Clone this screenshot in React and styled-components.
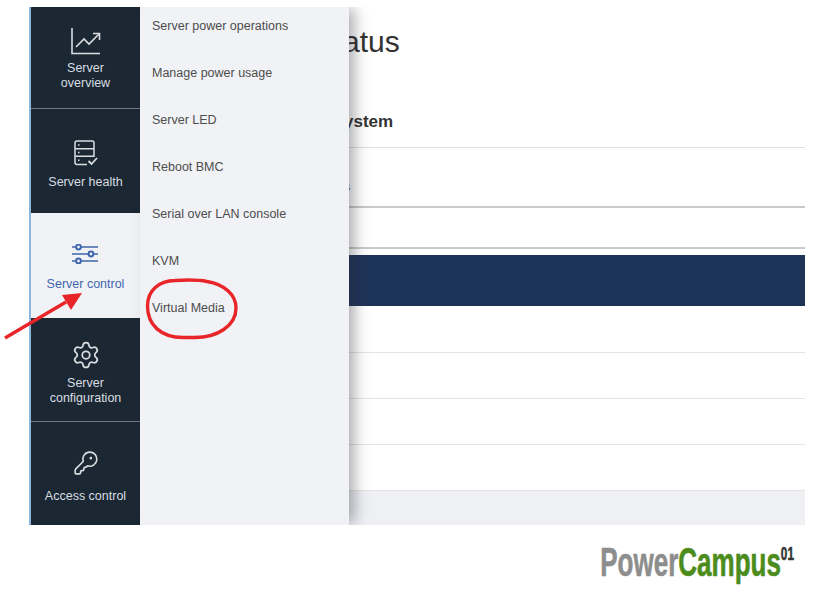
import React from 'react';
import styled, { createGlobalStyle } from 'styled-components';
import { KeyRound, Settings } from 'lucide-react';

const navItems = [
  { label: ['Server', 'overview'], icon: 'chart', height: 102, lift: 2, gap: 6, divider: true },
  { label: ['Server health'], icon: 'health', height: 104, lift: 8, gap: 9 },
  { label: ['Server control'], icon: 'sliders', height: 105, lift: 5, gap: 13, active: true },
  { label: ['Server', 'configuration'], icon: 'gear', height: 104, lift: 7, gap: 6, divider: true },
  { label: ['Access control'], icon: 'key', height: 103, lift: 6, gap: 13 },
];

const menuItems = [
  'Server power operations',
  'Manage power usage',
  'Server LED',
  'Reboot BMC',
  'Serial over LAN console',
  'KVM',
  'Virtual Media',
];

function ChartIcon() {
  return (
    <svg width="30" height="28" viewBox="0 0 30 28" fill="none" stroke="currentColor" strokeWidth="1.6">
      <path d="M1 1v25.5h28" />
      <path d="M5 20l8-8 5 5 10-10" />
      <path d="M22 6.5h6.5V13" />
    </svg>
  );
}

function HealthIcon() {
  return (
    <svg width="24" height="26" viewBox="0 0 24 26" fill="none" stroke="currentColor" strokeWidth="1.5">
      <path d="M13 24.5H3a2 2 0 0 1-2-2V3a2 2 0 0 1 2-2h15a2 2 0 0 1 2 2v14" />
      <path d="M1 8.7h19M1 16.3h19" />
      <path d="M4 5h1.5M4 12.5h1.5M4 20.2h1.5" />
      <path d="M14.5 21l3 3 5.5-6" strokeWidth="1.8" />
    </svg>
  );
}

function SlidersIcon() {
  return (
    <svg width="27" height="20" viewBox="0 0 27 20" fill="none" stroke="currentColor" strokeWidth="1.5">
      <path d="M0 3h26M0 10h26M0 17h26" />
      <circle cx="6.5" cy="3" r="2.4" fill="#f0f2f6" strokeWidth="2" />
      <circle cx="19" cy="10" r="2.4" fill="#f0f2f6" strokeWidth="2" />
      <circle cx="6.5" cy="17" r="2.4" fill="#f0f2f6" strokeWidth="2" />
    </svg>
  );
}

const icons = {
  chart: <ChartIcon />,
  health: <HealthIcon />,
  sliders: <SlidersIcon />,
  gear: <Settings size={30} strokeWidth={1.4} />,
  key: <KeyRound size={26} strokeWidth={1.5} />,
};

export default function App() {
  return (
    <Page>
      <GlobalStyle />
      <Frame>
        <Nav>
          {navItems.map((item) => (
            <NavItem
              key={item.icon}
              $height={item.height}
              $lift={item.lift}
              $gap={item.gap}
              $active={item.active}
              $divider={item.divider}
            >
              <IconSlot>{icons[item.icon]}</IconSlot>
              <NavLabel>
                {item.label.map((line) => (
                  <span key={line}>{line}</span>
                ))}
              </NavLabel>
            </NavItem>
          ))}
        </Nav>
        <Flyout>
          {menuItems.map((item) => (
            <MenuLink key={item}>{item}</MenuLink>
          ))}
        </Flyout>
        <Main>
          <Title>atus</Title>
          <SectionTitle>ystem</SectionTitle>
          <InfoRow $height={58}>
            <InfoText>s</InfoText>
          </InfoRow>
          <InfoRow $height={39} />
          <Band />
          <PlainRow />
          <PlainRow />
          <PlainRow />
          <PlainRow />
          <Footer />
        </Main>
      </Frame>
      <LogoRow>
        <Logo>
          <LogoGrey>Power</LogoGrey>
          <LogoGreen>Campus</LogoGreen>
          <LogoSup>01</LogoSup>
        </Logo>
      </LogoRow>
      <ArrowMark width="90" height="55" viewBox="0 0 90 55">
        <path d="M1 48L62 12" stroke="#e8262a" strokeWidth="3.4" fill="none" />
        <path d="M78 3L58 5l9 15z" fill="#e8262a" />
      </ArrowMark>
      <CircleMark width="94" height="63" viewBox="0 0 94 63">
        <path
          d="M30 2.5C45 1.5 55 2 62 3.5 80 6.5 91 17 91 30 91 48 72 59.5 50 59.5H38C16 59.5 2.5 47 2.5 28 2.5 12 14 3 30 2.5z"
          fill="none"
          stroke="#e8262a"
          strokeWidth="3.4"
        />
      </CircleMark>
    </Page>
  );
}

const GlobalStyle = createGlobalStyle`
  html, body {
    margin: 0;
    padding: 0;
    background: #fff;
    font-family: "Liberation Sans", Arial, sans-serif;
  }
`;

const Page = styled.div`
  position: relative;
  width: 816px;
  height: 594px;
  padding: 7px 11px 0 29px;
  box-sizing: border-box;
  overflow: hidden;
`;

const Frame = styled.div`
  display: flex;
  height: 518px;
  border-left: 2px solid #8db5d8;
  overflow: hidden;
`;

const Nav = styled.nav`
  flex: 0 0 109px;
  display: flex;
  flex-direction: column;
  background: #1b2834;
`;

const NavItem = styled.div`
  height: ${(p) => p.$height}px;
  box-sizing: border-box;
  padding-top: ${(p) => p.$lift}px;
  display: flex;
  flex-direction: column;
  align-items: center;
  justify-content: center;
  gap: ${(p) => p.$gap}px;
  background: ${(p) => (p.$active ? '#f0f2f6' : '#1b2834')};
  color: ${(p) => (p.$active ? '#3f66ad' : '#d9dde0')};
  border-bottom: ${(p) => (p.$divider ? '1px solid #6f7882' : 'none')};
`;

const IconSlot = styled.div`
  display: flex;
  align-items: center;
  justify-content: center;
`;

const NavLabel = styled.div`
  display: flex;
  flex-direction: column;
  align-items: center;
  font-size: 12.5px;
  line-height: 15px;
`;

const Flyout = styled.aside`
  position: relative;
  z-index: 1;
  flex: 0 0 209px;
  box-sizing: border-box;
  padding: 12px 0 0 12px;
  display: flex;
  flex-direction: column;
  gap: 33px;
  background: #f0f2f6;
  box-shadow: 7px 0 14px -2px rgba(40, 40, 50, 0.4);
`;

const MenuLink = styled.span`
  font-size: 12.5px;
  line-height: 14px;
  color: #4d4d4d;
  white-space: nowrap;
`;

const Main = styled.main`
  flex: 1;
  min-width: 0;
  display: flex;
  flex-direction: column;
  background: #fff;
  overflow: hidden;
`;

const Title = styled.h1`
  margin: 0;
  padding: 17px 0 0;
  height: 36px;
  font-size: 30px;
  line-height: 36px;
  font-weight: 400;
  text-indent: -6px;
  color: #333;
`;

const SectionTitle = styled.h2`
  margin: 50px 0 0;
  height: 38px;
  box-sizing: border-box;
  border-bottom: 1px solid #dedede;
  font-size: 17px;
  line-height: 24px;
  font-weight: 700;
  text-indent: -5px;
  color: #333;
`;

const InfoRow = styled.div`
  height: ${(p) => p.$height}px;
  border-bottom: 2px solid #c9c9c9;
  display: flex;
  align-items: flex-end;
`;

const InfoText = styled.span`
  padding-bottom: 12px;
  margin-left: -5px;
  font-size: 12.5px;
  color: #555;
`;

const Band = styled.div`
  height: 51px;
  margin: 6px 0 1px;
  background: #1e3358;
`;

const PlainRow = styled.div`
  height: 45px;
  border-bottom: 1px solid #e4e4e4;
`;

const Footer = styled.div`
  flex: 1;
  background: #eff0f4;
`;

const LogoRow = styled.div`
  display: flex;
  justify-content: flex-end;
  padding: 14px 11px 0 0;
`;

const Logo = styled.div`
  display: flex;
  align-items: flex-start;
  font-weight: 700;
  font-size: 40px;
  line-height: 46px;
  transform: scaleX(0.65);
  transform-origin: right top;
  -webkit-text-stroke: 0.6px currentColor;
`;

const LogoGrey = styled.span`
  color: #8d8d8d;
`;

const LogoGreen = styled.span`
  color: #4c8c1c;
`;

const LogoSup = styled.span`
  margin-top: 5px;
  font-size: 18px;
  line-height: 20px;
  color: #333;
`;

const ArrowMark = styled.svg`
  position: absolute;
  z-index: 2;
  left: 4px;
  top: 290px;
`;

const CircleMark = styled.svg`
  position: absolute;
  z-index: 2;
  left: 145px;
  top: 278px;
`;
